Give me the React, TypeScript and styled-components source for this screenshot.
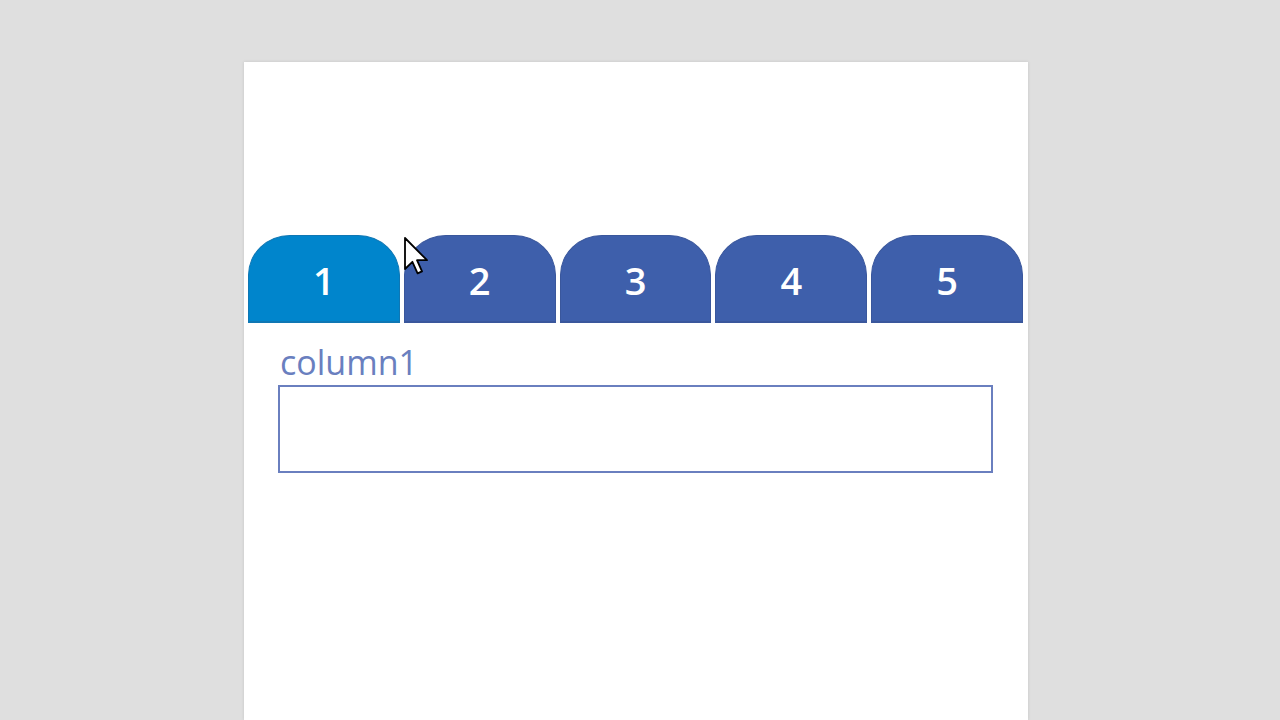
import React from "react";
import styled, { createGlobalStyle } from "styled-components";

const Global = createGlobalStyle`
  html, body { margin: 0; padding: 0; background: #dfdfdf; height: 100%; overflow: hidden; }
  #root { height: 100%; }
`;

const Stage = styled.div`
  width: 1280px;
  height: 720px;
  display: flex;
  justify-content: center;
  padding-top: 62px;
  box-sizing: border-box;
  position: relative;
`;

const Panel = styled.div`
  width: 784px;
  margin-left: -8px;
  height: 658px;
  background: #ffffff;
  box-shadow: 0 0 3px rgba(0, 0, 0, 0.12);
  box-sizing: border-box;
  padding: 173px 5px 0 4px;
  display: flex;
  flex-direction: column;
  font-family: "Open Sans", "Noto Sans", sans-serif;
`;

const TabRow = styled.div`
  display: flex;
  gap: 4px;
`;

const Tab = styled.div<{ $active?: boolean }>`
  flex: 1;
  height: 88px;
  box-sizing: border-box;
  background: ${(p) => (p.$active ? "#0085cc" : "#3e5fab")};
  border: 1px solid ${(p) => (p.$active ? "#0f77b4" : "#3a579c")};
  border-bottom-width: 2px;
  border-radius: 42px 42px 0 0 / 40px 40px 0 0;
  display: flex;
  align-items: center;
  justify-content: center;
  color: #ffffff;
  font-size: 38px;
  font-weight: 600;
  padding-top: 2px;
`;

const Field = styled.div`
  display: flex;
  flex-direction: column;
  padding: 17px 30px 0 30px;
`;

const Label = styled.div`
  color: #6a7fbf;
  font-size: 34px;
  line-height: 44px;
  padding-left: 2px;
  margin-bottom: 1px;
`;

const InputBox = styled.div`
  height: 88px;
  border: 2px solid #6a7fbf;
  box-sizing: border-box;
  background: #ffffff;
`;

const Cursor = styled.svg`
  position: absolute;
  left: 404px;
  top: 237px;
  width: 26px;
  height: 38px;
`;

export default function App() {
  return (
    <>
      <Global />
      <Stage>
        <Panel>
          <TabRow>
            {[1, 2, 3, 4, 5].map((n) => (
              <Tab key={n} $active={n === 1}>
                {n}
              </Tab>
            ))}
          </TabRow>
          <Field>
            <Label>column1</Label>
            <InputBox />
          </Field>
        </Panel>
        <Cursor viewBox="0 0 13 19">
          <path
            d="M0.5 0.5 L0.5 16 L4.2 12.4 L6.8 18.2 L9 17.2 L6.5 11.6 L11.5 11.6 Z"
            fill="#ffffff"
            stroke="#000000"
            strokeWidth="0.9"
            strokeLinejoin="round"
          />
        </Cursor>
      </Stage>
    </>
  );
}
